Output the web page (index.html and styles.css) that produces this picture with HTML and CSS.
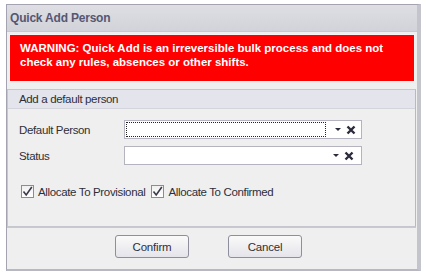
FILE: index.html
```html
<!DOCTYPE html>
<html>
<head>
<meta charset="utf-8">
<link rel="stylesheet" href="styles.css">
</head>
<body>
<div class="window">
  <div class="titlebar">Quick Add Person</div>
  <div class="content">
    <div class="warning">WARNING: Quick Add is an irreversible bulk process and does not check any rules, absences or other shifts.</div>
    <div class="group">
      <div class="group-head">Add a default person</div>
      <div class="group-body">
        <div class="row">
          <span class="label">Default Person</span>
          <div class="combo">
            <div class="combo-text focused"></div>
            <span class="arrow"></span>
            <svg class="clear" width="10" height="10" viewBox="0 0 10 10"><path d="M1.5 1.5 L8.5 8.5 M8.5 1.5 L1.5 8.5" stroke="#2b2b3b" stroke-width="2.4"/></svg>
          </div>
        </div>
        <div class="row">
          <span class="label">Status</span>
          <div class="combo">
            <div class="combo-text"></div>
            <span class="arrow"></span>
            <svg class="clear" width="10" height="10" viewBox="0 0 10 10"><path d="M1.5 1.5 L8.5 8.5 M8.5 1.5 L1.5 8.5" stroke="#2b2b3b" stroke-width="2.4"/></svg>
          </div>
        </div>
        <div class="checks">
          <label class="check"><span class="box"><svg width="11" height="11" viewBox="0 0 11 11"><path d="M1.5 5.5 L4.2 9 L9.8 1" fill="none" stroke="#3a3a4a" stroke-width="1.6"/></svg></span>Allocate To Provisional</label>
          <label class="check"><span class="box"><svg width="11" height="11" viewBox="0 0 11 11"><path d="M1.5 5.5 L4.2 9 L9.8 1" fill="none" stroke="#3a3a4a" stroke-width="1.6"/></svg></span>Allocate To Confirmed</label>
        </div>
      </div>
    </div>
    <div class="footer">
      <button class="btn">Confirm</button>
      <button class="btn">Cancel</button>
    </div>
  </div>
</div>
</body>
</html>
```
FILE: styles.css
```css
html, body { margin: 0; padding: 0; background: #ffffff; }
body { font-family: "Liberation Sans", sans-serif; font-size: 11.5px; letter-spacing: -0.35px; color: #2e2e38; }
.window {
  margin: 4px 0 0 6px;
  width: 410px;
  height: 264px;
  border: 1px solid #a4a4b0;
  border-right: 4px solid #c4c4cc;
  border-bottom: 2px solid #b8b8c2;
  background: #efefef;
  display: flex;
  flex-direction: column;
}
.titlebar {
  height: 26px;
  line-height: 26px;
  padding-left: 3px;
  font-weight: bold;
  font-size: 12px;
  letter-spacing: -0.2px;
  color: #565670;
  background: linear-gradient(#dedee4, #d2d2da);
  border-bottom: 1px solid #c8c8d0;
}
.content {
  flex: 1;
  display: flex;
  flex-direction: column;
  padding: 2px 1px 0 2px;
}
.warning {
  background: #ff0000;
  color: #ffffff;
  font-weight: bold;
  font-size: 11.5px;
  letter-spacing: 0;
  line-height: 14px;
  padding: 6px 10px 5px 10px;
  height: 35px;
  border: 1px solid #f4f4f4;
  margin-right: 1px;
}
.group {
  margin-top: 7px;
  border: 1px solid #c6c6ce;
  border-right: 1px solid #b8b8c2;
  flex: 0 0 auto;
  height: 136px;
  margin-left: -2px;
}
.group-head {
  height: 18px;
  line-height: 18px;
  padding-left: 11px;
  background: #e4e4ec;
  border-bottom: 1px solid #d4d4dc;
  color: #2e2e38;
}
.group-body { padding: 11px 0 0 11px; }
.row { display: flex; align-items: center; height: 19px; margin-bottom: 7px; }
.label { width: 105px; }
.combo {
  width: 236px;
  height: 17px;
  border: 1px solid #b4b4c0;
  background: #ffffff;
  display: flex;
  align-items: center;
}
.combo-text { width: 198px; height: 15px; margin-left: 1px; }
.combo-text.focused { border: 1px dotted #222; height: 13px; width: 198px; }
.arrow {
  margin-left: 9px;
  width: 0; height: 0;
  border-left: 3px solid transparent;
  border-right: 3px solid transparent;
  border-top: 3px solid #2b2b3b;
}
.clear { margin-left: 5px; }
.checks { display: flex; gap: 6px; margin-top: 20px; margin-left: 2px; }
.check { display: flex; align-items: center; gap: 4px; }
.box {
  width: 11px; height: 11px;
  border: 1px solid #8c8c98;
  background: linear-gradient(#f0f0f0, #ffffff);
  display: flex;
}
.footer {
  border-top: 1px solid #c8c8d0;
  margin-left: -2px;
  flex: 1;
  display: flex;
  justify-content: center;
  gap: 39px;
  padding-top: 7px;
  padding-right: 6px;
}
.btn {
  width: 74px;
  height: 23px;
  border: 1px solid #8e8e9c;
  border-radius: 3px;
  background: linear-gradient(#fafafa, #e4e4ea);
  font-family: "Liberation Sans", sans-serif;
  font-size: 11.5px;
  letter-spacing: -0.2px;
  color: #2e2e38;
  padding: 0;
}
```
